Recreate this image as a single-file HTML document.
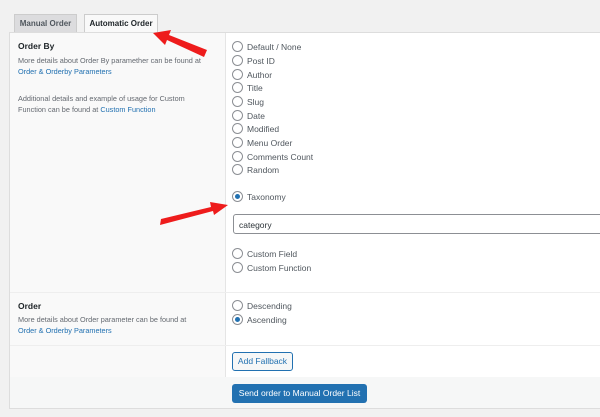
<!DOCTYPE html><html><head><style>
body{margin:0;width:600px;height:417px;background:#f1f1f1;font-family:"Liberation Sans",sans-serif;position:relative;overflow:hidden;color:#3c434a}
.a{position:absolute}
.tab{position:absolute;top:14px;height:18px;border:1px solid #ccc;border-bottom:none;font-size:8px;font-weight:bold;line-height:18px;text-align:center;box-sizing:border-box}
.r{position:absolute;left:232px;width:9px;height:9px;border:1px solid #8c8f94;border-radius:50%;background:#fff}
.r.c::after{content:"";position:absolute;left:2px;top:2px;width:5px;height:5px;border-radius:50%;background:#2271b1}
.l{position:absolute;left:247px;font-size:8.5px;color:#50575e}
.t{font-size:7.3px;color:#646970;line-height:10.5px}
.lk{color:#2271b1}
</style></head><body>
<div class="tab" style="left:14px;width:63px;background:#dcdcde;color:#50575e">Manual Order</div>
<div class="tab" style="left:84px;width:74px;background:#f9f9f9;color:#1d2327;height:19px">Automatic Order</div>
<div class="a" style="left:9px;top:32px;width:600px;height:377px;background:#fff;border:1px solid #ddd;box-sizing:border-box"></div>
<div class="a" style="left:10px;top:33px;width:215px;height:345px;background:#f9f9f9;border-right:1px solid #e5e5e5"></div>
<div class="a" style="left:10px;top:292px;width:600px;height:1px;background:#eee"></div>
<div class="a" style="left:10px;top:345px;width:600px;height:1px;background:#eee"></div>
<div class="a" style="left:10px;top:377px;width:600px;height:31px;background:#f6f7f7"></div>
<div class="a" style="left:18px;top:41px;font-size:8.5px;font-weight:bold;color:#1d2327">Order By</div>
<div class="a t" style="left:18px;top:56px">More details about Order By paramether can be found at<br><span class="lk">Order &amp; Orderby Parameters</span></div>
<div class="a t" style="left:18px;top:94px">Additional details and example of usage for Custom<br>Function can be found at <span class="lk">Custom Function</span></div>
<div class="a" style="left:18px;top:301px;font-size:8.5px;font-weight:bold;color:#1d2327">Order</div>
<div class="a t" style="left:18px;top:315px">More details about Order parameter can be found at<br><span class="lk">Order &amp; Orderby Parameters</span></div>
<div class="r" style="top:41px"></div><div class="l" style="top:42px">Default / None</div>
<div class="r" style="top:55px"></div><div class="l" style="top:56px">Post ID</div>
<div class="r" style="top:69px"></div><div class="l" style="top:70px">Author</div>
<div class="r" style="top:82px"></div><div class="l" style="top:83px">Title</div>
<div class="r" style="top:96px"></div><div class="l" style="top:97px">Slug</div>
<div class="r" style="top:110px"></div><div class="l" style="top:111px">Date</div>
<div class="r" style="top:123px"></div><div class="l" style="top:124px">Modified</div>
<div class="r" style="top:137px"></div><div class="l" style="top:138px">Menu Order</div>
<div class="r" style="top:151px"></div><div class="l" style="top:152px">Comments Count</div>
<div class="r" style="top:164px"></div><div class="l" style="top:165px">Random</div>
<div class="r c" style="top:191px"></div><div class="l" style="top:192px">Taxonomy</div>
<div class="a" style="left:233px;top:214px;width:370px;height:20px;border:1px solid #8c8f94;border-radius:3px;background:#fff;box-sizing:border-box;font-size:8.5px;color:#2c3338;padding:5px 0 0 5px">category</div>
<div class="r" style="top:248px"></div><div class="l" style="top:249px">Custom Field</div>
<div class="r" style="top:262px"></div><div class="l" style="top:263px">Custom Function</div>
<div class="r" style="top:300px"></div><div class="l" style="top:301px">Descending</div>
<div class="r c" style="top:314px"></div><div class="l" style="top:315px">Ascending</div>
<div class="a" style="left:232px;top:352px;width:61px;height:19px;border:1px solid #2271b1;border-radius:3px;background:#f6f7f7;box-sizing:border-box;font-size:8.5px;color:#2271b1;text-align:center;line-height:17px">Add Fallback</div>
<div class="a" style="left:232px;top:384px;width:135px;height:19px;border-radius:3px;background:#2271b1;font-size:8.5px;color:#fff;text-align:center;line-height:19px">Send order to Manual Order List</div>
<svg class="a" style="left:0;top:0" width="600" height="417">
<polygon points="204,57 207,50 169,35 171,30 153,33 165,45 167,40" fill="#ee1c1c"/>
<polygon points="160,225 161,219 211,207 210,202 228,205 214,215 213,211" fill="#ee1c1c"/>
</svg>
</body></html>
